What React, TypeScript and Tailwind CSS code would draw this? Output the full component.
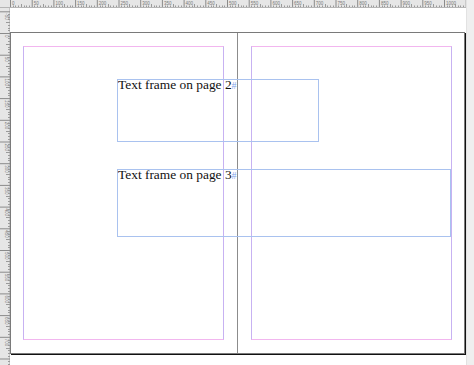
const SERIF = { fontFamily: '"Liberation Serif", "Times New Roman", serif' };

const STEP = 21.7;

const TopRuler = () => {
  const ticks = [];
  for (let i = 0; i < 22; i++) {
    const x = i * STEP;
    ticks.push(<line key={`M${i}`} x1={x + 0.5} y1={0} x2={x + 0.5} y2={7} stroke="#8a8a8a" strokeWidth={1} />);
    if (x + 14 < 456) {
      ticks.push(
        <text key={`T${i}`} x={x + 2} y={4.5} fontSize={4.5} fill="#7a7a7a" fontFamily="Liberation Sans, sans-serif">
          {i * 50}
        </text>
      );
    }
    for (let j = 1; j < 8; j++) {
      const sx = Math.round(x + (j * STEP) / 8) + 0.5;
      const h = j === 4 ? 3 : 1.5;
      ticks.push(<line key={`m${i}-${j}`} x1={sx} y1={7 - h} x2={sx} y2={7} stroke="#9a9a9a" strokeWidth={1} />);
    }
  }
  return (
    <svg width="456" height="7" className="block">
      {ticks}
    </svg>
  );
};

const LeftRuler = () => {
  const ticks = [];
  for (let i = -1; i < 16; i++) {
    const y = 25 + i * STEP;
    ticks.push(<line key={`M${i}`} x1={0} y1={y + 0.5} x2={10} y2={y + 0.5} stroke="#8a8a8a" strokeWidth={1} />);
    if (y > 0 && y + 16 < 357) {
      ticks.push(
        <text
          key={`T${i}`}
          x={0}
          y={0}
          fontSize={4.5}
          fill="#7a7a7a"
          fontFamily="Liberation Sans, sans-serif"
          transform={`translate(5 ${y + 2}) rotate(90)`}
        >
          {i * 50}
        </text>
      );
    }
    for (let j = 1; j < 8; j++) {
      const sy = Math.round(y + (j * STEP) / 8) + 0.5;
      const w = j === 4 ? 4 : 2;
      ticks.push(<line key={`m${i}-${j}`} x1={10 - w} y1={sy} x2={10} y2={sy} stroke="#9a9a9a" strokeWidth={1} />);
    }
  }
  return (
    <svg width="10" height="357" className="block">
      {ticks}
    </svg>
  );
};

const TextFrame = ({ left, top, width, height, label }: { left: number; top: number; width: number; height: number; label: string }) => (
  <div
    className="absolute border border-[#a9c2ef]"
    style={{ left, top, width, height }}
  >
    <div className="absolute left-0 top-[-3px] whitespace-nowrap text-[13.4px] leading-[15px] text-[#111]" style={SERIF}>
      {label}
      <span className="text-[10px] text-[#7fa3ea]">#</span>
    </div>
  </div>
);

export default function App() {
  return (
    <div className="w-[474px] h-[365px] flex bg-white overflow-hidden">
      <div className="flex-1 flex flex-col">
        {/* Top ruler */}
        <div className="h-[7px] flex bg-[#e6e6e6] border-b border-[#b5b5b5] box-content">
          <div className="w-[10px] bg-[#e6e6e6]" />
          <TopRuler />
        </div>

        <div className="flex-1 flex">
          {/* Left ruler */}
          <div className="w-[10px] bg-[#e6e6e6] border-r border-[#c5c5c5]">
            <LeftRuler />
          </div>

          {/* Pasteboard */}
          <div className="flex-1 relative bg-white">
            {/* Spread */}
            <div className="absolute left-0 top-[24px] w-[455px] h-[322px] border border-[#7a7a7a] shadow-[1px_1px_0_#111] bg-white">
              {/* Spine */}
              <div className="absolute left-[226px] top-0 bottom-0 w-px bg-[#8c8c8c]" />

              {/* Margins left page */}
              <div className="absolute left-[12px] top-[13px] w-[201px] h-[294px] border-y border-y-[#f2b6ef] border-x border-x-[#c7b2f2]" />
              {/* Margins right page */}
              <div className="absolute left-[240px] top-[13px] w-[201px] h-[294px] border-y border-y-[#f2b6ef] border-x border-x-[#c7b2f2]" />
            </div>

            <TextFrame left={107} top={71} width={202} height={63} label="Text frame on page 2" />
            <TextFrame left={107} top={161} width={334} height={68} label="Text frame on page 3" />
          </div>
        </div>
      </div>

      {/* Scrollbar */}
      <div className="w-[8px] bg-[#efefef] border-l border-[#e2e2e2]" />
    </div>
  );
}
